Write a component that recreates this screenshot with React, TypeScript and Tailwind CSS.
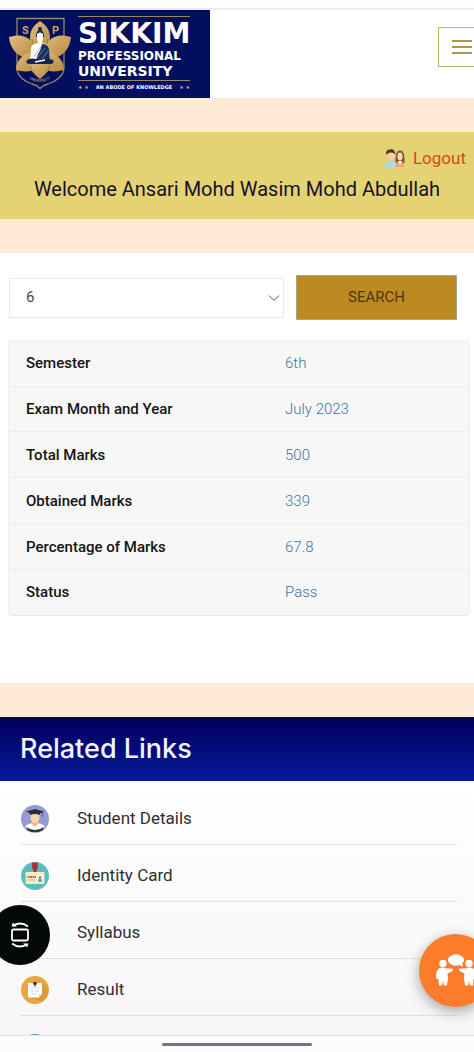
import React, { useState } from "react";

const results = [
  { label: "Semester", value: "6th" },
  { label: "Exam Month and Year", value: "July 2023" },
  { label: "Total Marks", value: "500" },
  { label: "Obtained Marks", value: "339" },
  { label: "Percentage of Marks", value: "67.8" },
  { label: "Status", value: "Pass" },
];

const Emblem = () => (
  <svg
    width="64"
    height="74"
    viewBox="0 0 64 74"
    className="shrink-0"
    aria-hidden="true"
  >
    <defs>
      <linearGradient id="petal" x1="0" y1="0" x2="1" y2="1">
        <stop offset="0" stopColor="#dfbd7c" />
        <stop offset="1" stopColor="#b5863c" />
      </linearGradient>
    </defs>
    <path
      d="M9 1.500H56V51C56 59 47 65 40 67Q35 68 32 71.500Q29 68 24 67C17 65 9 59 9 51Z"
      fill="#020f60"
      stroke="#9c8768"
      strokeWidth="1.300"
    />
    <text x="14" y="17" fontSize="11" fontWeight="700" fill="#c9a468">
      S
    </text>
    <text x="44" y="17" fontSize="11" fontWeight="700" fill="#c9a468">
      P
    </text>
    <g fill="url(#petal)">
      <path d="M32 4C24 9 22 15 22 21L24 40H40L42 21C42 15 40 9 32 4Z" />
      <path d="M1 20C10 17 19 18 25 26L29 44L17 41C8 38 2 31 1 20Z" />
      <path d="M63 20C54 17 45 18 39 26L35 44L47 41C56 38 62 31 63 20Z" />
      <path d="M8 53C8 45 12 40 20 36L34 42L30 52C23 55 15 55 8 53Z" />
      <path d="M56 53C56 45 52 40 44 36L30 42L34 52C41 55 49 55 56 53Z" />
      <path d="M21 44H43C43 53 38 57 32 62C26 57 21 53 21 44Z" />
    </g>
    <path
      d="M24 22Q26 29 25 38M40 22Q38 29 39 38M22 47Q23 54 27 57M42 47Q41 54 37 57"
      fill="none"
      stroke="#916c30"
      strokeWidth="0.700"
    />
    <circle cx="32" cy="12" r="2" fill="#17264f" />
    <path d="M28 20Q28 13 32 13Q36 13 36 20Z" fill="#17264f" />
    <path
      d="M29 17Q32 14 35 17V22Q34 25 34 26Q41 27 41 32L42 44H22L23 31Q23 27 30 26Q30 24 29 22Z"
      fill="#fffdf8"
    />
    <path d="M34 27Q40 27 41 32L42 43H28L30 37Q33 33 34 27Z" fill="#17315c" />
    <path
      d="M19 43Q24 40 31 43Q38 40 45 43Q47 46 43 47H21Q17 46 19 43Z"
      fill="#17264f"
    />
    <path d="M33 30L26 40M37 31L29 41M40 34L34 42" stroke="#8399bd" strokeWidth="0.700" />
    <path d="M27 45L37 43" stroke="#fff" strokeWidth="1.500" />
    <path id="arc" d="M14 56Q32 74 50 56" fill="none" />
    <text fontSize="4" fill="#d2b27e" textAnchor="middle">
      <textPath href="#arc" startOffset="50%">
        UNIVERSITY
      </textPath>
    </text>
  </svg>
);

const Logo = () => (
  <a
    href="#home"
    className="flex w-[210px] items-center gap-[6px] bg-[#020f60] pl-2 text-white"
  >
    <Emblem />
    <span className="flex w-28 flex-col whitespace-nowrap border-t border-[#9c8768] pt-px font-['DejaVu_Sans',sans-serif] font-bold">
      <span className="text-[28px] leading-[31px]">SIKKIM</span>
      <span className="text-[12px] leading-[15px]">PROFESSIONAL</span>
      <span className="text-[14px] leading-[15px]">UNIVERSITY</span>
      <span className="mt-px flex items-center justify-between border-t border-[#9c8768] text-[5px] leading-3">
        <span className="text-[#d0ae70]">★ ★</span>
        AN ABODE OF KNOWLEDGE
        <span className="text-[#d0ae70]">★ ★</span>
      </span>
    </span>
  </a>
);

const PeopleIcon = () => (
  <svg width="20" height="18" viewBox="0 0 20 18" aria-hidden="true">
    <path d="M0 18Q0 11 6 11Q12 11 12 18Z" fill="#a5dcf4" />
    <path d="M4 10H8V12L6 15L4 12Z" fill="#eebd90" />
    <ellipse cx="6" cy="6" rx="4" ry="5" fill="#f6cfa3" />
    <path d="M1.500 6Q0 1 5 .5Q10-.5 10.500 6Q9 3 6 3.500Q3 3 1.500 6Z" fill="#4b3424" />
    <path d="M10.500 14Q10 1 15 1.500Q20 1 19.500 14Z" fill="#7d5233" />
    <path d="M10 18Q11 12 15 12Q19 12 19.500 18Z" fill="#f2a56a" />
    <path d="M13 12H17L15 16Z" fill="#fff2e2" />
    <ellipse cx="15" cy="7.500" rx="2.600" ry="4" fill="#f8d6ae" />
  </svg>
);

const StudentIcon = () => (
  <svg width="28" height="28" viewBox="0 0 28 28" aria-hidden="true">
    <circle cx="14" cy="14" r="14" fill="#979bd3" />
    <path d="M4 22Q6 18 14 18Q22 18 24 22Q20 28 14 28Q8 28 4 22Z" fill="#fff" />
    <path d="M5 22Q14 28 23 22L22 25Q14 30 6 25Z" fill="#26384a" />
    <path d="M11 16H17V19L14 22L11 19Z" fill="#e8b98e" />
    <path d="M9.500 8H18.500V13Q18 18 14 18Q10 18 9.500 13Z" fill="#f7d5a8" />
    <path d="M5 6.500L14 4L23 6.500L19 8.500V10Q14 8 9 10V8.500Z" fill="#292b36" />
    <path d="M21.500 7V12" stroke="#6a4f9b" strokeWidth="1" />
  </svg>
);

const CardIcon = () => (
  <svg width="28" height="28" viewBox="0 0 28 28" aria-hidden="true">
    <circle cx="14" cy="14" r="14" fill="#5dbcc1" />
    <path d="M11 .5H17V6L15 10H13L11 6Z" fill="#b23a48" />
    <path d="M14 1V10" stroke="#7c2532" strokeWidth="1" />
    <rect x="4.500" y="10" width="19" height="12" rx="1" fill="#f3ecc4" />
    <path d="M6.500 15H15" stroke="#c06b52" strokeWidth="2" strokeDasharray="2 0.500" />
    <path d="M6.500 18H14" stroke="#c6bf98" strokeWidth="1" />
    <rect x="16" y="13" width="6" height="7" fill="#fff" />
    <path d="M17 20V17.500Q19 15.500 21 17.500V20Z" fill="#68a6c9" />
    <circle cx="19" cy="15.500" r="1.300" fill="#8b6b54" />
  </svg>
);

const BookIcon = () => (
  <svg width="28" height="28" viewBox="0 0 28 28" aria-hidden="true">
    <circle cx="14" cy="14" r="14" fill="#4f5d73" />
    <rect x="8" y="7" width="12" height="14" fill="#fff" />
  </svg>
);

const NoteIcon = () => (
  <svg width="28" height="28" viewBox="0 0 28 28" aria-hidden="true">
    <circle cx="14" cy="14" r="14" fill="#e9a53f" />
    <path d="M21 7L27 13L26 20L20 26L9 21Z" fill="#dc9a38" />
    <path d="M7 7H21V18L18 21.500H7Z" fill="#fdfdfd" />
    <path d="M21 18L18 21.500V18Z" fill="#cfd3d8" />
    <path d="M9.500 12H13M15 12H18M9.500 15H12M14 15H18M11 18H15" stroke="#ccd8e2" />
    <path d="M14 9V11" stroke="#8a4a20" />
    <circle cx="14" cy="7.500" r="1.800" fill="#2b2f38" />
  </svg>
);

const MoreIcon = () => (
  <svg width="28" height="28" viewBox="0 0 28 28" aria-hidden="true">
    <circle cx="14" cy="14" r="14" fill="#4897b5" />
  </svg>
);

const links = [
  { label: "Student Details", icon: <StudentIcon /> },
  { label: "Identity Card", icon: <CardIcon /> },
  { label: "Syllabus", icon: <BookIcon /> },
  { label: "Result", icon: <NoteIcon /> },
];

const RotateIcon = () => (
  <svg
    width="20"
    height="28"
    viewBox="0 0 20 28"
    fill="none"
    stroke="#fff"
    strokeWidth="1.800"
    aria-hidden="true"
  >
    <rect x="2" y="8.500" width="16" height="11" rx="1.500" />
    <path d="M3.500 4.500Q11 0 18 5.500" />
    <path d="M16.500 23.500Q9 28 2 22.500" />
    <path d="M1.500 5.500L3 1.500L7 5.500Z" fill="#fff" stroke="none" />
    <path d="M18.500 22.500L17 26.500L13 22.500Z" fill="#fff" stroke="none" />
  </svg>
);

const Person = () => (
  <>
    <circle cx="8" cy="9.500" r="3.700" />
    <path d="M4.500 14Q8 13 11 14.500L17 14.500Q19 15.500 17.500 17L12.500 19.500L13 24L12 31.500H9L8 27L7 31.500H4L3.500 25Q1 26 1 22Q1 16 4.500 14Z" />
  </>
);

const ChatIcon = () => (
  <svg width="42" height="33" viewBox="0 0 42 33" fill="#fff" aria-hidden="true">
    <Person />
    <g transform="translate(42 0) scale(-1 1)">
      <Person />
    </g>
    <ellipse cx="21" cy="6" rx="8" ry="5.700" />
    <path d="M23 10L28 13L27 8Z" />
  </svg>
);

export default function App() {
  const [semester, setSemester] = useState("6");

  return (
    <div className="relative flex h-screen flex-col overflow-hidden bg-white font-[Roboto,sans-serif]">
      <div className="h-[10px] shrink-0 border-b-2 border-[#efedf4] bg-[#fefcff]" />

      <div className="min-h-0 flex-1 overflow-x-hidden overflow-y-auto [scrollbar-width:none]">
        <header className="flex h-[88px] justify-between">
          <Logo />
          <button
            type="button"
            aria-label="Menu"
            className="-mr-3 mt-[17px] flex h-10 w-12 flex-col items-center justify-center gap-1 border border-[#c4b36c]"
          >
            <span className="h-[2px] w-5 bg-[#b09640]" />
            <span className="h-[2px] w-5 bg-[#b09640]" />
            <span className="h-[2px] w-5 bg-[#b09640]" />
          </button>
        </header>

        <section className="bg-[#ffead7] py-[34px]">
          <div className="flex h-[87px] flex-col bg-[#e5d272] px-2 pt-3">
            <a
              href="#logout"
              className="flex items-center justify-end gap-2 text-[17px] leading-7 text-[#d8481b]"
            >
              <PeopleIcon />
              Logout
            </a>
            <h1 className="mt-[3px] text-center text-[20px] leading-7 text-[#13132b]">
              Welcome Ansari Mohd Wasim Mohd Abdullah
            </h1>
          </div>
        </section>

        <main className="h-[430px] px-2 pt-[22px]">
          <form
            className="flex items-center gap-3 pr-[9px]"
            onSubmit={(e) => e.preventDefault()}
          >
            <div className="relative ml-px flex-1">
              <select
                aria-label="Semester"
                value={semester}
                onChange={(e) => setSemester(e.target.value)}
                className="h-10 w-full appearance-none border border-[#e9e9e9] bg-white px-4 text-[15px] text-[#4a4a4a]"
              >
                {["1", "2", "3", "4", "5", "6"].map((s) => (
                  <option key={s}>{s}</option>
                ))}
              </select>
              <svg
                className="pointer-events-none absolute top-4 right-1"
                width="12"
                height="8"
                viewBox="0 0 12 8"
                fill="none"
                stroke="#555"
              >
                <path d="M1 1.500L6 6.500L11 1.500" />
              </svg>
            </div>
            <button
              type="submit"
              className="h-[45px] w-[161px] border border-[#a9a886] bg-[#bc8a20] text-[15px] text-[#4d3714]"
            >
              SEARCH
            </button>
          </form>

          <div className="mt-5 mr-[-4px] overflow-hidden rounded-sm border border-[#f0f0f0] border-b-[#f3e3e3] bg-[#f7f7f7]">
            <table className="h-[274px] w-full table-fixed text-left">
              <tbody>
                {results.map((row) => (
                  <tr
                    key={row.label}
                    className="border-b border-[#ededed] last:border-b-0"
                  >
                    <th className="w-3/5 px-[17px] text-[15px] font-medium text-[#141414]">
                      {row.label}
                    </th>
                    <td className="text-[15px] font-light text-[#3a74a8]">
                      {row.value}
                    </td>
                  </tr>
                ))}
              </tbody>
            </table>
          </div>
        </main>

        <div className="h-[34px] bg-[#ffead7]" />

        <section>
          <h2 className="bg-linear-to-b from-[#02005e] to-[#051a98] px-5 text-[27px] leading-[64px] font-medium text-[#f2f4ff] font-[Inter,sans-serif]">
            Related Links
          </h2>
          <ul className="bg-linear-to-b from-white via-[#fafafb] to-[#f8f3f9] pt-[7px] pr-4 pl-[21px]">
            {links.map((link) => (
              <li key={link.label} className="border-b border-dotted border-[#c9c9cf]">
                <a
                  href="#related"
                  className="flex h-14 items-center gap-7 pt-[6px] text-[17px] text-[#2e2e32]"
                >
                  {link.icon}
                  {link.label}
                </a>
              </li>
            ))}
            <li>
              <a href="#more" aria-label="More" className="flex pt-[18px] pb-3">
                <MoreIcon />
              </a>
            </li>
          </ul>
        </section>
      </div>

      <footer className="flex h-[17px] shrink-0 justify-center border-t border-[#e4dfe6] bg-[#fefbff] pt-[7px]">
        <div className="h-[3px] w-[150px] rounded-full bg-[#77747b]" />
      </footer>

      <button
        type="button"
        aria-label="Rotate screen"
        className="absolute bottom-[87px] -left-[10px] flex size-[60px] items-center justify-center rounded-full bg-[#050a08]"
      >
        <RotateIcon />
      </button>
      <button
        type="button"
        aria-label="Chat"
        className="absolute -right-[18px] bottom-[45px] flex size-[73px] items-center justify-center rounded-full bg-[#fb7d2c] shadow-[0_4px_14px_rgba(0,0,0,0.35)]"
      >
        <ChatIcon />
      </button>
    </div>
  );
}
